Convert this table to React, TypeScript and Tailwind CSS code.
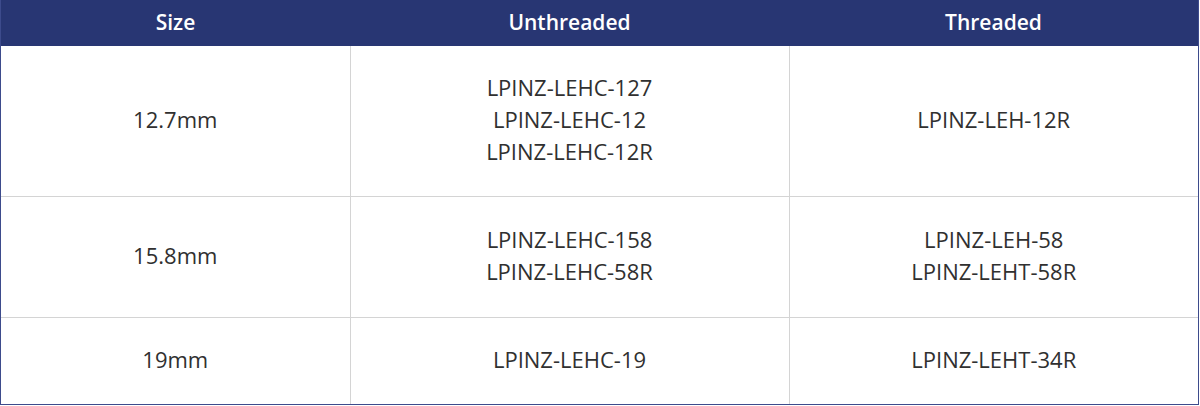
const rows = [
  { size: "12.7mm", unthreaded: ["LPINZ-LEHC-127", "LPINZ-LEHC-12", "LPINZ-LEHC-12R"], threaded: ["LPINZ-LEH-12R"], h: "h-[150px]" },
  { size: "15.8mm", unthreaded: ["LPINZ-LEHC-158", "LPINZ-LEHC-58R"], threaded: ["LPINZ-LEH-58", "LPINZ-LEHT-58R"], h: "h-[121px]" },
  { size: "19mm", unthreaded: ["LPINZ-LEHC-19"], threaded: ["LPINZ-LEHT-34R"], h: "h-[87px]" },
];

export default function App() {
  return (
    <div className="w-[1200px] h-[406px] bg-white font-['Open_Sans',sans-serif]">
      <div className="w-[1199px] border border-[#3d4b8c] border-t-0">
        <table className="w-full table-fixed border-collapse">
          <colgroup>
            <col className="w-[349px]" />
            <col className="w-[439px]" />
            <col className="w-[409px]" />
          </colgroup>
          <thead>
            <tr className="h-[46px] bg-[#283673] text-white">
              <th className="text-[21px] font-semibold">Size</th>
              <th className="text-[21px] font-semibold">Unthreaded</th>
              <th className="text-[21px] font-semibold">Threaded</th>
            </tr>
          </thead>
          <tbody className="text-[22px] leading-[32px] text-[#303030]">
            {rows.map((r, i) => {
              const b = i < rows.length - 1 ? "border-b border-[#d4d4d4]" : "";
              return (
                <tr key={r.size} className={r.h}>
                  <td className={`${b} border-r border-r-[#d4d4d4] pb-1 text-center`}>{r.size}</td>
                  <td className={`${b} border-r border-r-[#d4d4d4] pb-1 text-center`}>
                    {r.unthreaded.map((t) => (
                      <div key={t}>{t}</div>
                    ))}
                  </td>
                  <td className={`${b} pb-1 text-center`}>
                    {r.threaded.map((t) => (
                      <div key={t}>{t}</div>
                    ))}
                  </td>
                </tr>
              );
            })}
          </tbody>
        </table>
      </div>
    </div>
  );
}
